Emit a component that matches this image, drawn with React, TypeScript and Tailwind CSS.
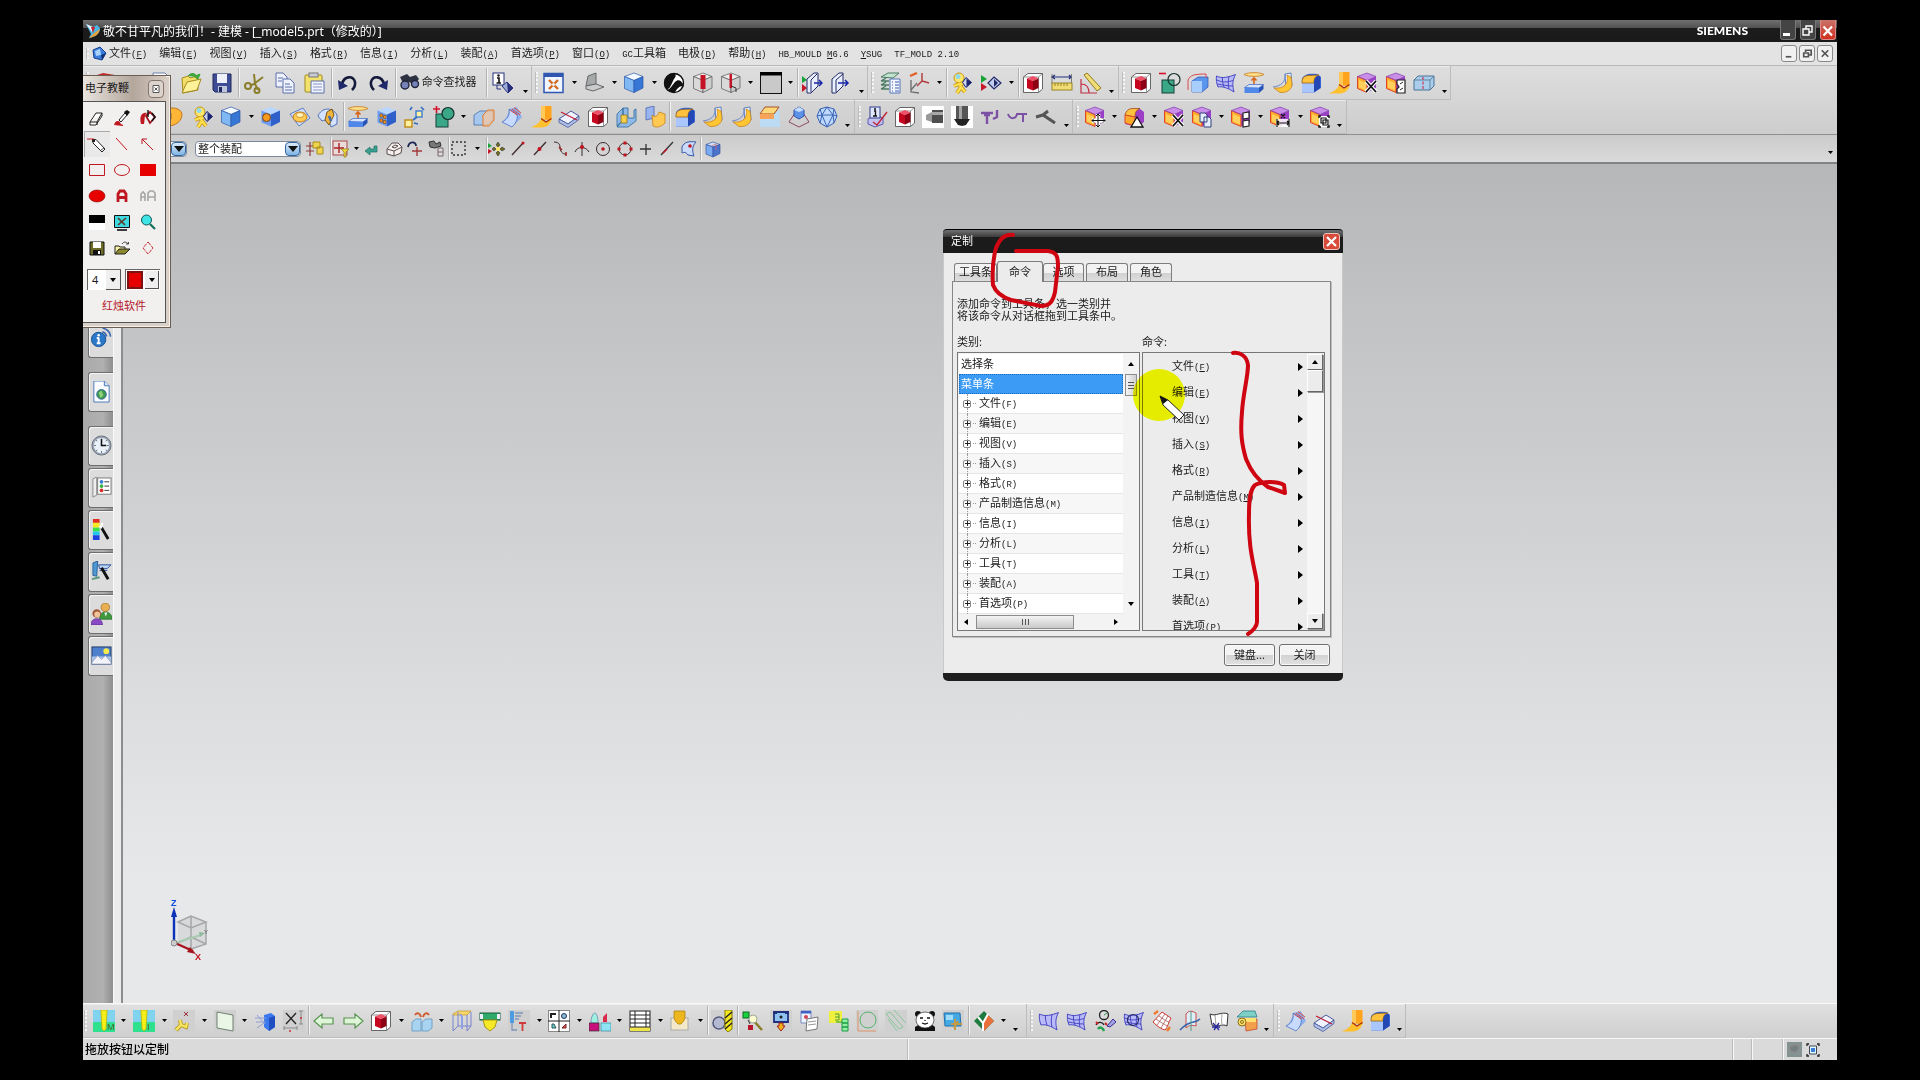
import type { ReactNode } from 'react'
import clsx from 'clsx'

/* ---------- icon parts, drawn in a 22 x 22 box ---------- */

function Cube({ t, l, r, s = 'none' }: { t: string; l: string; r: string; s?: string }) {
  return (
    <g stroke={s} strokeWidth=".7" strokeLinejoin="round">
      <path fill={t} d="M11 1 20 4.5 11 8.5 1.5 4.5Z" />
      <path fill={l} d="M1.5 4.5 11 8.5V20.5L1.5 16.5Z" />
      <path fill={r} d="M20 4.5 11 8.5V20.5L20 16Z" />
    </g>
  )
}

const SyncCube = () => (
  <g>
    <Cube t="#c98fe8" l="#ffa92b" r="#9a3fc6" />
    <path d="M3 8 10 11V18.5L3 15.5Z" fill="#ffd15c" />
    <path d="M1.5 4.5 11 8.5V20.5L1.5 16.5Z" fill="none" stroke="#e2452e" strokeWidth="1" />
    <path d="M11 1 20 4.5 11 8.5 1.5 4.5Z" fill="none" stroke="#8a49b4" strokeWidth=".8" />
  </g>
)

const RedCube = () => (
  <g>
    <path d="M1.5 5 6 1.5H20.5V17L16.5 20.5H1.5Z" fill="#fff" stroke="#444" strokeWidth=".8" />
    <path d="M1.5 5H16.5V20.5M16.5 5 20.5 1.5" fill="none" stroke="#777" strokeWidth=".8" />
    <path d="M11 4 16.5 6.5 11 9 5 6.5Z" fill="#ef5068" />
    <path d="M5 6.5 11 9V18.5L5 16Z" fill="#c4061f" />
    <path d="M16.5 6.5 11 9V18.5L16.5 16Z" fill="#8d0014" />
  </g>
)

const Person = () => (
  <g>
    <circle cx="8" cy="6" r="5" fill="#ffe76a" stroke="#c79412" />
    <circle cx="7" cy="4.5" r="2.5" fill="#8fd8ee" />
    <path d="M8 11 10 15 6 21M10 15 14 20M8 12 3 14M9 12 14 11" fill="none" stroke="#c79412" strokeWidth="4" strokeLinejoin="round" />
    <path d="M8 11 10 15 6 21M10 15 14 20M8 12 3 14M9 12 14 11" fill="none" stroke="#ffe14d" strokeWidth="2.4" strokeLinejoin="round" />
    <path d="M15 5.5 20.5 10.5 15 15.5 11.5 10.5Z" fill="#c9d2ec" stroke="#1b2470" />
    <path d="M15.5 6.5 20.5 10.5 15.5 15Z" fill="#1b2470" />
  </g>
)

const Leg = () => (
  <g>
    <path d="M11 0H21.5V14L11 13.5Z" fill="#ffa41c" />
    <path d="M11 0H15V13H11Z" fill="#ffc95a" />
    <path d="M11 12.5C10 17 6 19 1 21.5H12C17 21 21 18 21.5 13L16 16Z" fill="#ffc02e" />
    <path d="M11 12.5 16 16 21.5 12.5" fill="none" stroke="#a32a10" strokeWidth="1.2" />
  </g>
)

const Blend = () => (
  <g>
    <path d="M2 7C3 3 8 1 17 2L21 5V16L14 20.5H2Z" fill="#3563d8" />
    <path d="M2 11H14V20.5H2Z" fill="#a9c6ff" />
    <path d="M2 10C2 5 5 4 8 3.5L19 3C15 4 14 7 14 11H2Z" fill="#ffc23e" stroke="#94601a" strokeWidth=".8" />
    <path d="M14 11C14 7 16 4 20 4V16L14 20.5Z" fill="#2348b4" />
  </g>
)

const Mesh = () => (
  <g fill="#b9baf8" stroke="#4847c4" strokeWidth="1">
    <path d="M1.5 4C7 7 14 5 20.5 2.5 17 9 17.5 14 19 20 13 16 7 14 3 15 1.5 11 1 8 1.5 4Z" />
    <path d="M7.5 5.5C7 9 8 12 9 15M14 4.5C13 9 13 13 14 17M2 8C8 11 13 10 18 8.5M2.5 12C8 13 13 14 18 14" fill="none" />
  </g>
)

const Unite = ({ sign }: { sign: string }) => (
  <g>
    <rect x="3" y="8" width="12" height="13" fill="#3aa786" stroke="#17403a" />
    <circle cx="15" cy="7.5" r="6" fill={sign === '+' ? '#3aa786' : 'none'} stroke="#17302c" strokeWidth="1.2" />
    <path d={sign === '+' ? 'M0 3H7M3.5 0V7' : 'M0 1.5H7'} stroke="#d5122c" strokeWidth="1.6" />
  </g>
)

const Caliper = ({ letter }: { letter: string }) => (
  <g>
    <rect width="22" height="22" fill="#7fd3ef" />
    <rect y="12" width="22" height="10" fill="#2fe08e" />
    <path d="M8 0H14V3L13 19 11 21 9 19 8 3Z" fill="#f6ee17" stroke="#b5a80c" strokeWidth=".7" />
    <text x="14" y="20" fontSize="9" fill="#4b5c28" fontFamily="Liberation Sans">{letter}</text>
  </g>
)

const Backing = () => <rect width="22" height="22" fill="#d0d0d0" />

const icons: Record<string, ReactNode> = {
  start: <path d="M2 3 8 1 20 3 17 10 4 12Z" fill="#c22b2b" />,
  new: <path d="M3 1H15L19 5V21H3Z" fill="#fff" stroke="#6f7ea8" />,
  open: (
    <g>
      <path d="M2 6 8 4 10 6 17 4 18 18 3 21Z" fill="#f2df6a" stroke="#a58a20" />
      <path d="M2 21 7 10 21 7 17 18Z" fill="#fdf29a" stroke="#a58a20" />
      <path d="M8 4C11 0 16 1 17 5M14 4.5 18 7 20 2Z" fill="#3da53c" stroke="#3da53c" />
    </g>
  ),
  save: (
    <g>
      <path d="M2 2H20V20H4L2 18Z" fill="#3e4c96" stroke="#1e2860" />
      <rect x="6" y="2" width="10" height="9" fill="#eef1fb" />
      <rect x="7" y="14" width="9" height="6" fill="#bfc6dc" />
      <rect x="8" y="15" width="3" height="5" fill="#1e2860" />
    </g>
  ),
  cut: (
    <g fill="none" stroke="#8b7f2c" strokeWidth="2">
      <path d="M10 2 11 12 14 18M19 5 10 12 6 14" />
      <circle cx="4" cy="14" r="3" />
      <circle cx="13" cy="18.5" r="2.5" />
    </g>
  ),
  copy: (
    <g fill="#eef2ff" stroke="#5b6ea8">
      <path d="M2 1H9L13 5V15H2Z" />
      <path d="M9 7H16L20 11V21H9Z" />
      <path d="M4 6H9M4 9H8M11 12H16M11 15H18M11 18H18" fill="none" />
    </g>
  ),
  paste: (
    <g>
      <rect x="1" y="3" width="17" height="17" rx="1" fill="#f3e26c" stroke="#a18a1e" />
      <rect x="5" y="1" width="9" height="4" fill="#c9ccd6" stroke="#777" />
      <path d="M7 9H20V21H7Z" fill="#f2f5ff" stroke="#5b6ea8" />
      <path d="M9 12H18M9 15H18M9 18H18" stroke="#8796c4" />
    </g>
  ),
  undo: (
    <g>
      <path d="M5 12C7 4 16 3 18 10 18.5 13 17 16 15 18" fill="none" stroke="#151a3c" strokeWidth="2.6" />
      <path d="M1 8 2 18 11 14Z" fill="#20286c" />
    </g>
  ),
  redo: (
    <g>
      <path d="M17 12C15 4 6 3 4 10 3.5 13 5 16 7 18" fill="none" stroke="#151a3c" strokeWidth="2.6" />
      <path d="M21 8 20 18 11 14Z" fill="#20286c" />
    </g>
  ),
  finder: (
    <g>
      <path d="M2 5 9 2 12 5 18 3 21 7 17 12 10 10 4 9Z" fill="#2d3242" />
      <circle cx="7" cy="13" r="4" fill="#7583b8" stroke="#20243a" strokeWidth="1.4" />
      <circle cx="17" cy="12" r="3.5" fill="#7583b8" stroke="#20243a" strokeWidth="1.4" />
    </g>
  ),
  info: (
    <g>
      <rect x="1" y="1" width="11" height="12" fill="#fff" stroke="#26307c" />
      <path d="M5 6H7V11M4.5 11H9" fill="none" stroke="#111" strokeWidth="1.6" />
      <circle cx="6.5" cy="3.5" r="1.2" fill="#111" />
      <path d="M10 14 15 10 21 16 16 21Z" fill="#9cabd8" stroke="#26307c" />
      <path d="M15 10 21 16 16 21Z" fill="#26307c" />
      <path d="M5 13V17H9" fill="none" stroke="#26307c" />
    </g>
  ),
  fit: (
    <g>
      <rect x="1" y="1.5" width="19" height="19" fill="#f0f5ff" stroke="#2f56b0" strokeWidth="1.5" />
      <rect x="1" y="1" width="19" height="4" fill="#2f56b0" />
      <path d="M6 8 15 17M15 8 6 17" stroke="#d2691e" strokeWidth="2.4" />
      <circle cx="10.5" cy="12.5" r="1.5" fill="#f0f5ff" />
    </g>
  ),
  shade: (
    <g>
      <path d="M5 4 13 1 13 12 3 14Z" fill="#a7aaaa" stroke="#666" />
      <path d="M3 14 13 12 21 15 10 19 3 17Z" fill="#c9cccc" stroke="#666" />
    </g>
  ),
  bluecube: <Cube t="#f2f9ff" l="#7fb8f2" r="#3676d4" s="#2d57a8" />,
  yin: (
    <g>
      <circle cx="11" cy="11" r="10" fill="#111" />
      <path d="M12 1.5C18 2 21 7 20 12 18 8 15 7 12 10 9 13 8 17 4 18 8 22 13 21 12 20 14 17 16 14 20 14 19 18 16 21 11 21L11 20.5C9 21 6 20 3.500 17.500 7 17 8 13 10 9 11 6 14 5 12 1.500Z" fill="#fff" />
      <circle cx="11" cy="11" r="9.5" stroke="#111" strokeWidth="1.4" />
    </g>
  ),
  wirered: (
    <g>
      <Cube t="#eceaea" l="#d9d9d9" r="#cfcfcf" s="#555" />
      <rect x="8.5" y="3" width="5" height="14" fill="#c51224" />
    </g>
  ),
  wirecut: (
    <g>
      <Cube t="#eceaea" l="#d9d9d9" r="#cfcfcf" s="#555" />
      <rect x="9.5" y="2" width="2.5" height="14" fill="#c51224" />
      <path d="M11 14 16 16V20" stroke="#333" />
    </g>
  ),
  bgcolor: (
    <g>
      <rect x=".5" y=".5" width="21" height="21" fill="#c9c9c9" stroke="#111" />
      <rect width="22" height="3.5" fill="#000" />
    </g>
  ),
  clipgo: (
    <g>
      <path d="M1 4 6 8 1 11Z" fill="#18a336" />
      <path d="M1 12 6 16 1 20Z" fill="#c5162a" />
      <path d="M6 7 13 1H17V14L10 21H6Z" fill="#e9efff" stroke="#222b66" />
      <path d="M10 8V20M10 8 16 2" stroke="#222b66" />
      <path d="M13 11H21M18 8 21 11 18 14" stroke="#1726a8" strokeWidth="1.5" />
    </g>
  ),
  clip: (
    <g>
      <path d="M2 7 9 1H13V14L6 21H2Z" fill="#e9efff" stroke="#222b66" />
      <path d="M6 8V20M6 8 13 2" stroke="#222b66" />
      <path d="M8 11H18M15 8 18 11 15 14" stroke="#1726a8" strokeWidth="1.5" />
    </g>
  ),
  layers: (
    <g>
      <path d="M1 5 8 1H19L13 6Z" fill="#bfe3cc" stroke="#4a7a63" />
      <path d="M1 9 6 6M1 13 6 10M1 17 6 14M1 17H9M1 9H9M1 13H9" stroke="#4a7a63" strokeWidth="1.4" />
      <path d="M10 7H20V21H10Z" fill="#f1f5ff" stroke="#5472b4" />
      <path d="M12 10H13M15 10H19M12 13H13M15 13H19M12 16H13M15 16H19M12 19H13M15 19H19" stroke="#3b5cab" />
    </g>
  ),
  csys: (
    <g>
      <path d="M2 8V20L10 21M2 18 8 11" stroke="#707070" strokeWidth="1.4" />
      <path d="M13 1V9L20 11M13 9 8 14" stroke="#b33a3a" strokeWidth="1.4" />
      <path d="M1 4 8 1" stroke="#e2622a" strokeWidth="2.4" />
    </g>
  ),
  person: <Person />,
  play: (
    <g>
      <path d="M1 3 7 7 1 11Z" fill="#18a336" />
      <path d="M1 11 7 15 1 19Z" fill="#c5162a" />
      <path d="M14 5 21 11 14 17 8 11Z" fill="#c3cdec" stroke="#222b66" strokeWidth="1.2" />
      <path d="M14 7 18 11 14 15Z" fill="#222b66" />
    </g>
  ),
  redcube: <RedCube />,
  ruler: (
    <g>
      <path d="M1 5H20M4 3 1 5 4 7M18 3 20 5 18 7" stroke="#26307c" strokeWidth="1.2" />
      <path d="M1 2V12M20.5 2V12" stroke="#555" strokeWidth=".7" />
      <rect x="1" y="11" width="20" height="7" fill="#f0dd76" stroke="#9a8422" />
      <path d="M4 11V14M7 11V14M10 11V14M13 11V14M16 11V14" stroke="#9a8422" />
    </g>
  ),
  angle: (
    <g>
      <path d="M1 7V21H17M1 12C7 12 9 16 9 21" stroke="#c22f45" strokeWidth="1.2" />
      <path d="M4 3 7 1 21 16 17 19Z" fill="#f0dd76" stroke="#8f7a1e" />
    </g>
  ),
  unite: <Unite sign="+" />,
  subtract: <Unite sign="-" />,
  shell: (
    <g>
      <path d="M5 9 11 5H21V15L15 20H5Z" fill="#5b96ee" stroke="#2b4eb0" strokeWidth=".7" />
      <path d="M5 9H15V20H5Z" fill="#a8ceff" />
      <path d="M1 18V8C3 3 8 2 19 2V6" stroke="#d64a55" />
    </g>
  ),
  mesh: <Mesh />,
  extrude: (
    <g>
      <path d="M1 2.5C5 0 17 0 21 2.5 17 5 5 5 1 2.5Z" fill="#ffe08a" stroke="#c87a1a" strokeWidth=".8" />
      <path d="M11 12V6M8.5 8.5 11 6 13.5 8.5" stroke="#d8641c" strokeWidth="1.6" />
      <path d="M1.5 15.5 6 12.5H20.5L16 16Z" fill="#d6e5ff" stroke="#3763c4" strokeWidth=".7" />
      <path d="M1.5 15.5 16 16V21H1.5Z" fill="#4f88e8" />
      <path d="M16 16 20.5 12.5V17L16 21Z" fill="#2753b8" />
    </g>
  ),
  sweep: (
    <g>
      <path d="M13 2 19 1 20 14 14 16Z" fill="#e8f1ff" stroke="#4168b0" strokeWidth=".8" />
      <path d="M15 3C17 12 12 17 2 16L8 20.5C17 21 20 16 20 12L19 5Z" fill="#ffc634" stroke="#c77a16" strokeWidth=".7" />
      <path d="M13 2C14 10 9 14 1 15" stroke="#6b88c8" />
    </g>
  ),
  blend: <Blend />,
  leg: <Leg />,
  draft: (
    <g>
      <path d="M8 3 16 1 21 11 11 21 1 16C5 13 7 9 8 3Z" fill="#8fb0ee" />
      <path d="M8 3C9 9 7 13 1 16L11 21C15 17 17 13 16 8Z" fill="#c6dbff" stroke="#4669b4" strokeWidth=".7" />
      <path d="M11 3 19 9M13 1.5 20 7M9 4 16 9" stroke="#d9443f" />
    </g>
  ),
  slab: (
    <g>
      <path d="M1 13 13 5 21 10 10 18Z" fill="#eef3ff" stroke="#49599a" />
      <path d="M1 13V16.5L10 21.5 21 13.5V10L10 18Z" fill="#aebfe6" stroke="#49599a" strokeWidth=".8" />
      <path d="M3 6 19 14" stroke="#c01830" strokeWidth="1.2" />
    </g>
  ),
  syncdel: (
    <g>
      <SyncCube />
      <path d="M10 9 20 20M20 9 10 20" stroke="#fff" strokeWidth="4" />
      <path d="M10 9 20 20M20 9 10 20" stroke="#111" strokeWidth="1.8" />
    </g>
  ),
  syncreplace: (
    <g>
      <SyncCube />
      <path d="M12 8H20V21H12V17L14 15 12 12Z" fill="#fff" stroke="#222" strokeWidth="1.2" />
      <path d="M15 12 18 10M15 18 18 16" stroke="#222" />
    </g>
  ),
  syncmove: (
    <g>
      <SyncCube />
      <path d="M14 8V21M8 14.5H21" stroke="#fff" strokeWidth="4.5" />
      <path d="M14 8V21M8 14.5H21M12 10 14 8 16 10M12 19 14 21 16 19M10 12.5 8 14.5 10 16.5M19 12.5 21 14.5 19 16.5" stroke="#111" />
    </g>
  ),
  syncpull: (
    <g>
      <path d="M2 9 9 3H17L21 6V16L14 21 2 18Z" fill="#9a3fc6" />
      <path d="M2 9C3 5 5 3 9 2.5H17C13 4 12 7 12 11L2 9Z" fill="#ffc23e" stroke="#a04a1c" strokeWidth=".8" />
      <path d="M2 9 12 11V20L2 17Z" fill="#ffa92b" stroke="#e2452e" />
      <path d="M14 11 20 21H8Z" fill="#fff" stroke="#111" strokeWidth="1.3" />
    </g>
  ),
  synccopy: (
    <g>
      <SyncCube />
      <path d="M9 7H14L16 9V16H9ZM13 11H18L20 13V21H13Z" fill="#e6edff" stroke="#33407c" />
    </g>
  ),
  syncpanel: (
    <g>
      <SyncCube />
      <path d="M13 7 19 6V12L13 13ZM13 15 19 14V20L13 21Z" fill="#fff" stroke="#222" strokeWidth="1.2" />
    </g>
  ),
  syncdim: (
    <g>
      <SyncCube />
      <path d="M7 13H21V21H7Z" fill="#fff" opacity=".85" />
      <path d="M8 13V21M20 13V21M8 17H20M10 15 8 17 10 19M18 15 20 17 18 19M12 8 16 12M16 8 12 12" stroke="#111" strokeWidth="1.2" />
    </g>
  ),
  syncgroup: (
    <g>
      <SyncCube />
      <path d="M10 10H20V21H10Z" fill="#fff" />
      <path d="M12 12H17V17H12ZM14 14H19V19H14Z" stroke="#111" strokeWidth="1.2" />
      <path d="M10 12V10H12M20 12V10H18M10 19V21H12M20 19V21H18" stroke="#111" strokeWidth="1.4" />
    </g>
  ),
  tube: (
    <g>
      <path d="M1 8 5 4H21V14L17 18H1Z" fill="#a9cdea" stroke="#4b7397" />
      <path d="M1 8H17V18M17 8 21 4" stroke="#4b7397" strokeWidth=".8" />
      <path d="M10 5V18" stroke="#c94d6c" strokeWidth="1.4" strokeDasharray="3 1.5" />
    </g>
  ),
  sketch: <path d="M2 16 14 3 19 8 7 20 2 21Z" fill="#f4d64c" stroke="#8b7a1a" />,
  revolve: (
    <g>
      <path d="M2 4C8 0 18 2 19 8 19 15 13 20 4 20L8 13 2 11Z" fill="#ffb636" stroke="#c2761c" />
      <path d="M2 4 8 7V13" stroke="#b0701c" />
    </g>
  ),
  hole: (
    <g>
      <Cube t="#b9d6ff" l="#6b9cf0" r="#2f5fc8" />
      <circle cx="6.5" cy="11.5" r="4" fill="#f79a1f" stroke="#7a4210" />
    </g>
  ),
  boss: (
    <g>
      <path d="M1 8 14 2 21 12 10 20Z" fill="#cfe0ff" stroke="#5f7fc0" />
      <ellipse cx="11" cy="11" rx="7" ry="5" fill="#ffcb4d" stroke="#c27a1b" />
      <ellipse cx="11" cy="9" rx="4" ry="2.5" fill="#fff1b8" stroke="#c27a1b" strokeWidth=".7" />
    </g>
  ),
  groove: (
    <g>
      <path d="M1 10C4 2 15 0 20 9V18L14 21C13 15 9 13 5 15Z" fill="#d2e2ff" stroke="#5470b4" />
      <path d="M10 6 15 3 17 9 12 19 8 14Z" fill="#f3b43a" stroke="#7a5516" />
      <path d="M12 10 14 15" stroke="#3a6db5" strokeWidth="2.4" />
    </g>
  ),
  pattern: (
    <g>
      <Cube t="#b9d6ff" l="#6b9cf0" r="#2f5fc8" />
      <path d="M4 8H6.5V11H4ZM7.5 9.5H10V12.5H7.5ZM4 13H6.5V16H4ZM7.5 14.5H10V17.5H7.5Z" fill="#f79a1f" stroke="#7a4210" strokeWidth=".6" />
    </g>
  ),
  array: (
    <g>
      <rect x="1" y="14" width="7" height="7" fill="#fff1a0" stroke="#bd8a14" strokeWidth="1.4" />
      <rect x="12" y="5" width="6" height="6" fill="#fff1a0" stroke="#3a7cd0" strokeWidth="1.4" />
      <path d="M9 14 13 11M6 4 8 1M17 1 20 4M10 17 14 18" stroke="#2f6bc4" strokeWidth="1.6" />
    </g>
  ),
  trim: (
    <g>
      <path d="M1 9 7 5H20V14L14 19H1Z" fill="#a6c8ef" stroke="#476ca8" strokeWidth=".8" />
      <path d="M10 9 15 4H21V14L16 20H10Z" fill="#fbc79b" fillOpacity=".7" stroke="#e07a2a" />
    </g>
  ),
  thicken: (
    <g>
      <path d="M2 8 8 2V14L2 20ZM8 2H13V12H19V4L21 3V15L13 21H2L8 14Z" fill="#8fb9e8" stroke="#2e6b9c" strokeWidth=".8" />
      <path d="M6 9H12V17H6Z" fill="#f5cf49" stroke="#8c6c14" strokeWidth=".7" />
    </g>
  ),
  offset: (
    <g>
      <path d="M2 2 10 0V12L2 14Z" fill="#9ab4ef" stroke="#4a64b4" strokeWidth=".8" />
      <path d="M8 9C11 12 14 10 15 6L21 8V17C17 21 13 22 9 20Z" fill="#ffc850" stroke="#c5831d" strokeWidth=".8" />
    </g>
  ),
  patch: (
    <g>
      <path d="M1 8H15L20 4 21 21H1Z" fill="#bcdcf6" />
      <path d="M1 8 6 1H20L15 8Z" fill="#ffd87a" stroke="#a8502b" />
      <path d="M1 8H15V13H1Z" fill="#f7a35b" />
    </g>
  ),
  scale: (
    <g>
      <path d="M11 1 21 16 11 21 1 16Z" stroke="#8d4a5c" />
      <path d="M11 1 16 4V10L11 13 6 10V4Z" fill="#5d92e8" stroke="#2d55aa" />
      <path d="M11 1 16 4 11 6 6 4Z" fill="#c7ddff" />
    </g>
  ),
  sphere: (
    <g stroke="#3a62b4">
      <path d="M11 1 18 3 21 10 18 17 11 21 4 17 1 10 4 3Z" fill="#bdd8fb" />
      <path d="M11 1 6 9 11 21 17 9ZM1 10 6 9H17L21 10M4 3 6 9M18 3 17 9M4 17 6 9M18 17 17 9" />
    </g>
  ),
  infocube: (
    <g>
      <path d="M2 13 9 9 17 12V18L9 21 2 18Z" fill="#c3c3f1" stroke="#5a58b4" />
      <rect x="4" y="1" width="10" height="11" fill="#dfe6ff" stroke="#333e8a" />
      <path d="M8 5H9.5V10M7 10H11M8 3H10" stroke="#111" strokeWidth="1.3" />
      <path d="M7 16 11 19 21 6" stroke="#c02538" strokeWidth="1.4" />
    </g>
  ),
  nozzle: (
    <g>
      <rect width="22" height="22" fill="#fff" />
      <path d="M4 9 10 6V16L4 14Z" fill="#999" />
      <path d="M10 4H21V17H10Z" fill="#4e4e4e" />
      <path d="M10 6H21V9H10Z" fill="#a8a8a8" />
    </g>
  ),
  mill: (
    <g>
      <rect width="22" height="22" fill="#fff" />
      <path d="M5 0H17V13H5Z" fill="#555" />
      <path d="M8 0H11V13H8Z" fill="#a5a5a5" />
      <path d="M3 13H19L15 19 11 20 7 19Z" fill="#222" />
    </g>
  ),
  clampa: <path d="M2 7H14M8 7V18M5 9H11M18 4V11L14 13" stroke="#7b50a5" strokeWidth="2.4" />,
  clampb: <path d="M1 8C3 14 9 13 10 8H20M16 8V16" stroke="#7b50a5" strokeWidth="2" />,
  branch: <path d="M1 11 8 9 20 17M8 9 13 5" stroke="#555" strokeWidth="3" />,

  // bottom row
  calM: <Caliper letter="M" />,
  calI: <Caliper letter="I" />,
  wrench: (
    <g>
      <Backing />
      <path d="M3 20 8 15 13 17 14 13M8 15 7 10" stroke="#b79b18" strokeWidth="4" />
      <path d="M3 20 8 15 13 17 14 13M8 15 7 10" stroke="#f6e462" strokeWidth="2.4" />
      <path d="M11 2 15 6M15 2 11 6" stroke="#a2303c" />
    </g>
  ),
  plane: (
    <g>
      <Backing />
      <path d="M3 2 19 5V21L3 18Z" fill="#eaf6e6" stroke="#707f70" />
    </g>
  ),
  moldblue: (
    <g>
      <path d="M10 5 17 3 21 6V17L15 21 10 17Z" fill="#3a78ee" />
      <path d="M15 8 21 6V17L15 21Z" fill="#1f4fc0" />
      <path d="M1 8H12M2 12H12M3 5 11 14M3 18 10 13" stroke="#8e9dd6" />
    </g>
  ),
  xdim: (
    <g>
      <Backing />
      <path d="M3 3 13 14M13 3 3 14" stroke="#222" strokeWidth="1.3" />
      <path d="M1 18H14M1 16V20M14 16V20M18 1V14M16 1H20M16 14H20" stroke="#8a8a8a" />
      <path d="M6 21H8M18 7V9" stroke="#c33" strokeWidth="1.5" />
    </g>
  ),
  left: <path d="M1 11 9 4V8H20V14H9V18Z" fill="#dff5d8" stroke="#5a9452" strokeWidth="1.2" />,
  right: <path d="M21 11 13 4V8H2V14H13V18Z" fill="#dff5d8" stroke="#5a9452" strokeWidth="1.2" />,
  split: (
    <g>
      <path d="M1 12 5 9H10V21H1ZM11 12 15 9H21V18L17 21H11Z" fill="#a8d4f2" stroke="#5f95bd" strokeWidth=".8" />
      <path d="M4 5C6 2 9 3 10 7M18 5C16 2 13 3 12 7" stroke="#cf5b32" strokeWidth="2" />
    </g>
  ),
  frame: (
    <g>
      <path d="M2 4 7 1H20L16 5H2Z" fill="#f6d56a" stroke="#bd9626" strokeWidth=".7" />
      <path d="M2 5V21M16 5V21M7 2V16M20 2V16M2 21 7 16H20L16 21" stroke="#7684cc" />
      <path d="M9 4 11 7V19" stroke="#8fa1e4" strokeWidth="2" />
    </g>
  ),
  funnel: (
    <g>
      <rect x="1" y="3" width="20" height="7" fill="#2faa6a" stroke="#186038" />
      <path d="M4 10H18L16 17 11 21 6 17Z" fill="#f7e928" stroke="#a39817" />
      <path d="M1 4H4V9H1ZM18 4H21V9H18Z" fill="#eef" />
    </g>
  ),
  textT: (
    <g>
      <Backing />
      <path d="M2 1H6V13H2Z" fill="#4f9ce0" />
      <path d="M4 13V20H9M7 3H15M7 6H13M7 9H11" stroke="#7d94bb" strokeWidth="1.3" />
      <path d="M11 13H18M14.5 13V21" stroke="#cf3a3a" strokeWidth="1.8" />
    </g>
  ),
  quad: (
    <g>
      <rect x=".5" y=".5" width="21" height="21" fill="#fff" stroke="#888" />
      <path d="M11 0V22M0 11H22" stroke="#222" />
      <path d="M8 4H3V8" stroke="#222" strokeWidth="2" />
      <circle cx="16" cy="6" r="2.5" fill="#8bc" stroke="#236" />
      <path d="M4 18V14H6L8 18Z" fill="#6cc" stroke="#355" />
      <path d="M14 18 18 14V18Z" fill="#e55" stroke="#722" />
    </g>
  ),
  lipstick: (
    <g>
      <path d="M2 13C2 5 5 3 6 3S9 6 9 13Z" fill="#9ff0e0" stroke="#569" strokeWidth=".6" />
      <path d="M14 12V7L18 3V12Z" fill="#d72a4c" />
      <rect y="13" width="10" height="8" fill="#c8107c" stroke="#333" strokeWidth=".7" />
      <rect x="12" y="13" width="10" height="8" fill="#8fe4f4" stroke="#3587a0" strokeWidth=".7" />
    </g>
  ),
  sheet: (
    <g>
      <rect x="1" y="1" width="20" height="20" fill="#fff" stroke="#222" />
      <path d="M1 17H21V21H1Z" fill="#efe34a" />
      <path d="M1 5H21M1 9H21M1 13H21M1 17H21M6 1V17M17 1V17" stroke="#222" />
    </g>
  ),
  pocket: (
    <g>
      <rect x="2" y="8" width="17" height="12" fill="#f3e9c8" stroke="#aaa" />
      <path d="M5 1H16V7C16 10 14 12 12 14H9C7 12 5 10 5 7Z" fill="#edb61f" stroke="#b08512" strokeWidth=".8" />
    </g>
  ),
  drill: (
    <g>
      <Backing />
      <circle cx="8" cy="13" r="6" fill="#b4b8d0" stroke="#555a80" strokeWidth="1.5" />
      <path d="M14 0H21V19L17 22 14 19Z" fill="#f4e61c" stroke="#887d00" />
      <path d="M14 8 21 2M14 14 21 8M14 19 21 13" stroke="#222" strokeWidth="1.4" />
    </g>
  ),
  wand: (
    <g>
      <rect x="1" y="2" width="6" height="6" fill="#18d13c" stroke="#0a6a1e" />
      <path d="M11 10 20 20" stroke="#8c7a28" strokeWidth="2.4" />
      <circle cx="11" cy="9" r="4" fill="#fcfbd0" stroke="#9a9" />
      <rect x="6" y="15" width="5" height="5" fill="#b8152b" />
      <path d="M6 10 8 14" stroke="#333" />
    </g>
  ),
  motor: (
    <g>
      <Backing />
      <path d="M4 2H18V12H4Z" fill="#8fc1f1" stroke="#20307c" strokeWidth="1.8" />
      <path d="M3 1H7V4H3ZM15 1H19V4H15Z" fill="#20307c" />
      <path d="M9 13H13V16H15L11 21 7 16H9Z" fill="#f2b218" stroke="#a1211c" />
      <circle cx="11" cy="7" r="1.5" fill="#222" />
    </g>
  ),
  pages: (
    <g>
      <path d="M2 1H12V13H2Z" fill="#eef2ff" stroke="#7a8bc2" />
      <path d="M2 1H12V3.5H2Z" fill="#3e63c4" />
      <path d="M8 9 19 7 18 19 7 21Z" fill="#fff" stroke="#777" />
      <path d="M9 12 17 11M9 15 17 14" stroke="#999" />
      <circle cx="7" cy="7" r="2" fill="#d4454f" />
    </g>
  ),
  ui: (
    <g>
      <rect x="1" y="1" width="13" height="12" fill="#eff03e" />
      <path d="M7 4H11V10H7M7 7H11" stroke="#4a9c3a" />
      <path d="M14 9H20V13H14ZM14 13H20V17H14ZM14 17H20V21H14ZM8 12H14" fill="#8ef0a2" stroke="#1e9a44" />
    </g>
  ),
  circle: (
    <g>
      <Backing />
      <circle cx="12" cy="10" r="8" stroke="#52b46c" />
      <path d="M2 1V21H20" stroke="#dd9367" />
    </g>
  ),
  hatch: (
    <g>
      <Backing />
      <path d="M1 4 14 19M5 2 18 17M9 0 21 13M1 4 5 2M14 19 18 17M3 9 12 21" stroke="#86c69a" />
    </g>
  ),
  panda: (
    <g>
      <path d="M1 17 6 14H17L21 17V21H1Z" fill="#111" />
      <circle cx="4" cy="4" r="3" fill="#111" />
      <circle cx="18" cy="4" r="3" fill="#111" />
      <ellipse cx="11" cy="10" rx="9" ry="8" fill="#fff" stroke="#333" strokeWidth=".7" />
      <path d="M6 8H9M13 8H16M8 13 11 14 14 13M11 10V11" stroke="#111" strokeWidth="1.3" />
    </g>
  ),
  screen: (
    <g>
      <Backing />
      <path d="M2 3H18L19 16H3Z" fill="#44a8e2" stroke="#2272ae" />
      <path d="M4 5H11V10H4Z" fill="#a0dcf8" />
      <path d="M13 9V20M9 14H20M16 11 12 18" stroke="#c39a45" strokeWidth="2" />
    </g>
  ),
  logo: (
    <g>
      <path d="M11 1 21 11 11 21 1 11Z" fill="#1f7a40" />
      <path d="M15 5 21 11 11 21 10 13Z" fill="#e9703a" />
      <path d="M5 7 10 13V21M10 13 15 4" stroke="#fff" strokeWidth="2" />
    </g>
  ),
  surface: (
    <g stroke="#4847c4">
      <path d="M1.5 4C7 7 14 5 20.5 2.5 17 9 17.5 14 19 20 13 16 7 14 3 15 1.5 11 1 8 1.5 4Z" fill="#b9baf8" />
      <path d="M7.5 5.5C7 9 8 12 9 15M14 4.5C13 9 13 13 14 17" />
    </g>
  ),
  curves: (
    <g>
      <circle cx="9" cy="5" r="4.5" stroke="#222" strokeWidth="1.3" />
      <path d="M9 5 12 3" stroke="#2b9a4a" />
      <path d="M1 15C3 11 8 12 9 15" stroke="#222" strokeWidth="1.3" />
      <path d="M3 19C5 16 8 18 9 21" stroke="#1fa04b" strokeWidth="2.4" />
      <path d="M12 16 18 9 21 12 15 17Z" fill="#a3a0e8" stroke="#33318f" />
      <path d="M1 12 3 14M10 13 12 15" stroke="#c22" strokeWidth="2" />
    </g>
  ),
  meshring: (
    <g>
      <Mesh />
      <circle cx="10" cy="10" r="5.5" stroke="#222a66" strokeWidth="1.2" />
    </g>
  ),
  meshred: (
    <g>
      <path d="M2 12 11 2 20 8C17 13 17 17 14 20 10 19 6 16 2 12Z" fill="#fff" stroke="#cf3b33" />
      <path d="M5 9C9 12 13 14 16 16M8 6C12 9 15 11 18 12M6 15 14 4M10 18 17 6" stroke="#a55" strokeWidth=".8" />
      <path d="M3 4 7 1M16 21 19 17" stroke="#ef7a2d" strokeWidth="2.4" />
    </g>
  ),
  section: (
    <g>
      <path d="M7 4C10 0 13 1 17 3V16C13 15 10 15 7 18Z" fill="#dceef7" stroke="#c94b4b" />
      <path d="M1 20C5 16 8 14 11 13S18 12 21 9" stroke="#3a62a8" strokeWidth="1.6" />
      <path d="M12 1V21" stroke="#598" />
    </g>
  ),
  flag: (
    <g>
      <path d="M2 4C7 7 14 1 20 4L19 16C14 13 9 18 4 15Z" fill="#fff" stroke="#333" />
      <path d="M7 5C7 9 8 12 8 16M14 3C14 8 13 10 14 14" stroke="#888" strokeWidth=".8" />
      <path d="M5 13 11 20M11 13 6 20M4 17H12" stroke="#2c2a9c" strokeWidth="1.3" />
    </g>
  ),
  roll: (
    <g>
      <path d="M1 7 7 1H19L21 7Z" fill="#7fd0c4" stroke="#2a7d8a" strokeWidth=".8" />
      <path d="M9 9H21V19L10 21Z" fill="#f2a04b" stroke="#c24b34" strokeWidth=".8" />
      <path d="M5 8H20V12H6Z" fill="#ffe36e" />
      <circle cx="6" cy="12" r="4" fill="#ffe36e" stroke="#8b6d18" />
      <circle cx="6" cy="12" r="1.5" stroke="#8b6d18" />
    </g>
  ),

  // selection bar
  filter: (
    <g>
      <path d="M6 4V18M2 8H12M2 13H10" stroke="#8b3a3a" strokeWidth="1.2" />
      <path d="M9 4H16V10H9ZM13 9H19V16H13Z" fill="#f0d64e" stroke="#a78b1c" />
    </g>
  ),
  snapbox: (
    <g>
      <rect x="3" y="3" width="14" height="14" fill="#eadada" stroke="#a94a4a" />
      <path d="M9 5V15M4 10H14" stroke="#a22" strokeWidth="1.4" />
      <path d="M11 11H19L16 14V19H14V14Z" fill="#f1da3c" stroke="#8b7a1a" strokeWidth=".7" />
    </g>
  ),
  back: <path d="M4 13 9 9V11H13V8H16V14H9V17Z" fill="#3aa092" stroke="#1f6f64" strokeWidth=".7" />,
  solid: (
    <g fill="#f4efee" stroke="#5b4d4d">
      <path d="M4 11 9 5 15 5 19 9 18 15 11 18 4 16Z" />
      <path d="M4 11 11 13 19 9M11 13V18M9 9 12 7 15 8 12 10Z" />
    </g>
  ),
  turnplus: (
    <g>
      <path d="M4 9C5 3 12 3 12 8" stroke="#1b2050" strokeWidth="1.8" />
      <path d="M13 9V18M8 13H18" stroke="#a43b3b" strokeWidth="1.4" />
    </g>
  ),
  finddoc: (
    <g>
      <path d="M3 4 8 3 10 6 14 4 15 8 9 10 4 9Z" fill="#777" stroke="#333" />
      <path d="M12 10H17V18H12ZM12 14H17" fill="#ddd" stroke="#766" />
    </g>
  ),
  marquee: <path d="M4 4H17V17H4Z" stroke="#333" strokeWidth="1.4" strokeDasharray="2 2" />,
  snapall: (
    <g>
      <path d="M2 5 6 8 2 10Z" fill="#18a336" />
      <path d="M2 11 6 13 2 16Z" fill="#c5162a" />
      <path d="M12 4 14 7 12 9 10 7ZM12 13 14 15 12 18 10 15ZM6 11 8 9 10 11 8 13ZM14 11 16 9 19 11 16 13Z" fill="#6f6c22" stroke="#333" strokeWidth=".6" />
      <circle cx="12" cy="11" r="2" fill="#ffe95a" />
    </g>
  ),
  endpoint: (
    <g>
      <path d="M5 17 16 5" stroke="#3b2a2a" strokeWidth="1.3" />
      <circle cx="16" cy="5" r="1.5" fill="#c1121f" />
    </g>
  ),
  midpoint: (
    <g>
      <path d="M5 17 17 4" stroke="#3b2a2a" strokeWidth="1.3" />
      <circle cx="10.5" cy="11" r="2" fill="#c1121f" />
    </g>
  ),
  ctrlpoint: (
    <g stroke="#3b2a2a">
      <path d="M4 4C10 4 10 8 10 10S12 17 17 16" />
      <path d="M9 9 12 12M16 14V18" stroke="#a22" strokeWidth="1.5" />
    </g>
  ),
  cross: (
    <g>
      <path d="M11 4V18M4 14C6 8 15 8 18 14" stroke="#3b2a2a" />
      <circle cx="11" cy="9" r="2" fill="#c1121f" />
    </g>
  ),
  center: (
    <g>
      <circle cx="11" cy="11" r="6.5" stroke="#3b2a2a" />
      <circle cx="11" cy="11" r="1.8" fill="#c1121f" />
    </g>
  ),
  quadrant: (
    <g>
      <circle cx="11" cy="11" r="6" stroke="#333" />
      <path d="M11 3.5V6.5M11 15.5V18.5M3.5 11H6.5M15.5 11H18.5" stroke="#c1121f" strokeWidth="3" />
    </g>
  ),
  plus: <path d="M11 6V17M5 11H16" stroke="#333" strokeWidth="1.3" />,
  oncurve: (
    <g>
      <path d="M5 17 17 4" stroke="#333" strokeWidth="1.3" />
      <path d="M7 15 11 11" stroke="#c1121f" strokeWidth="1.6" />
    </g>
  ),
  face: (
    <g>
      <path d="M4 9C6 4 11 3 18 4 14 8 14 13 16 18L10 17C8 14 6 14 4 15Z" fill="#c9dafb" stroke="#3656a4" />
      <circle cx="12" cy="8" r="1.8" fill="#c1121f" />
    </g>
  ),
  facecube: (
    <g stroke="#3656a4" strokeWidth=".7">
      <path d="M11 4 18 6.5 11 9 4 6.5Z" fill="#cfe3fb" />
      <path d="M4 6.5 11 9V19L4 16Z" fill="#7aaaf0" />
      <path d="M18 6.5 11 9V19L18 15.5Z" fill="#4a74cc" />
      <path d="M9 8 14 6V12" stroke="#d66" />
    </g>
  ),
}

function Icon({ name }: { name: string }) {
  return (
    <svg viewBox="0 0 22 22" className="h-[22px] w-[22px] shrink-0" fill="none" aria-hidden="true">
      {icons[name]}
    </svg>
  )
}

function Caret() {
  return (
    <svg viewBox="0 0 5 3" className="h-[3px] w-[5px]" aria-hidden="true">
      <path d="M0 0H5L2.5 3Z" />
    </svg>
  )
}

function Arrow({ d, tall }: { d: string; tall?: boolean }) {
  return (
    <svg viewBox={tall ? '0 0 4 6' : '0 0 6 4'} className={clsx('shrink-0', tall ? 'h-1.5 w-1' : 'h-1 w-1.5')} aria-hidden="true">
      <path d={d} />
    </svg>
  )
}

const UP = 'M0 4H6L3 0Z'
const DOWN = 'M0 0H6L3 4Z'

/* ---------- toolbars ---------- */

// '|' divider, 'v' drop arrow of the icon before it, '>' overflow arrow
function ToolItems({ items, small }: { items: string[]; small?: boolean }) {
  return (
    <>
      {items.map((item, i) => {
        if (item === '|') return <span key={i} className="my-0.5 w-px self-stretch bg-[#b2b2b2] shadow-[1px_0_0_#f4f4f4]" />
        if (item === 'v')
          return (
            <button key={i} aria-label="更多" className={clsx('flex justify-center', small ? 'w-2' : 'w-[11px]')}>
              <Caret />
            </button>
          )
        if (item === '>')
          return (
            <button key={i} aria-label="工具条选项" className="flex w-3 justify-center self-end pb-1.5">
              <Caret />
            </button>
          )
        return (
          <button key={i} aria-label={item} className={clsx('flex shrink-0 items-center justify-center', small ? 'w-5' : 'w-7')}>
            <Icon name={item} />
          </button>
        )
      })}
    </>
  )
}

function Grip() {
  return <span className="my-1.5 w-1 shrink-0 self-stretch border-l-2 border-dotted border-[#f6f6f6] shadow-[-1px_0_0_#bdbdbd]" />
}

function ToolGroup({ items, className, children }: { items: string[]; className: string; children?: ReactNode }) {
  return (
    <div
      className={clsx(
        'flex h-[34px] shrink-0 items-center justify-between border-r border-b border-[#bcbcbc] shadow-[inset_0_1px_0_#ececec]',
        className,
      )}
    >
      <Grip />
      {children}
      <ToolItems items={items} />
    </div>
  )
}

function TopToolbars() {
  return (
    <div className="border-b border-[#8f8f8f] bg-[linear-gradient(#dedede,#cdcdcd)]">
      <div className="flex">
        <ToolGroup className="w-[449px] pl-1" items={['|', 'info', '>']}>
          <button aria-label="开始" className="w-[52px] shrink-0 pl-0.5">
            <Icon name="start" />
          </button>
          <ToolItems items={['new', 'open', 'save', '|', 'cut', 'copy', 'paste', '|', 'undo', 'redo', '|']} />
          <button className="flex w-[86px] shrink-0 items-center gap-0.5 whitespace-nowrap">
            <Icon name="finder" />
            命令查找器
          </button>
        </ToolGroup>
        <ToolGroup
          className="w-[336px] pl-1"
          items={['fit', 'v', 'shade', 'v', 'bluecube', 'v', 'yin', 'wirered', 'wirecut', 'v', 'bgcolor', 'v', '|', 'clipgo', 'clip', '>']}
        />
        <ToolGroup
          className="w-[251px] pl-1"
          items={['layers', 'csys', 'v', '|', 'person', 'play', 'v', '|', 'redcube', 'ruler', 'angle', '>']}
        />
        <ToolGroup
          className="w-[332px] pl-1"
          items={['redcube', 'subtract', 'shell', 'mesh', 'extrude', 'sweep', 'blend', 'leg', 'syncdel', 'syncreplace', 'tube', '>']}
        />
      </div>
      <div className="flex">
        <ToolGroup
          className="w-[772px] pl-1"
          items={[
            'sketch', 'plane', 'v', 'revolve', 'person', 'bluecube', 'v', 'hole', 'boss', 'groove', '|',
            'extrude', 'pattern', 'array', 'unite', 'v', 'trim', 'draft', 'leg', 'slab', 'redcube', 'thicken', 'offset', '|',
            'blend', 'sweep', 'sweep', 'patch', 'scale', 'sphere', '>',
          ]}
        />
        <ToolGroup className="w-[218px] pl-1" items={['infocube', 'redcube', 'nozzle', 'mill', 'clampa', 'clampb', 'branch', '>']} />
        <ToolGroup
          className="w-[274px] pl-1"
          items={['syncmove', 'v', 'syncpull', 'v', 'syncdel', 'synccopy', 'v', 'syncpanel', 'v', 'syncdim', 'v', 'syncgroup', '>']}
        />
      </div>
    </div>
  )
}

function BlueSelect({ value, label, className }: { value: string; label: string; className: string }) {
  return (
    <label className={clsx('flex h-4 shrink-0 rounded-sm border border-[#7b8a9c] bg-white', className)}>
      <select aria-label={label} className="min-w-0 flex-1 appearance-none pl-0.5 leading-none outline-none">
        <option>{value}</option>
      </select>
      <span className="flex w-[15px] items-center justify-center rounded-sm border border-[#35639a] bg-[linear-gradient(#dcecfb,#7fb4e4)]">
        <svg viewBox="0 0 10 6" className="h-1.5 w-2.5">
          <path d="M0 0H10L5 6Z" fill="#111" />
        </svg>
      </span>
    </label>
  )
}

function SelectionBar() {
  return (
    <div className="flex h-[29px] items-center border-b-2 border-[#808487] bg-[linear-gradient(#cbcbcb,#dadada)] pr-1 pl-2">
      <BlueSelect value="无过滤" label="类型过滤器" className="mr-2 w-24" />
      <BlueSelect value="整个装配" label="选择范围" className="mr-1 w-[106px]" />
      <div className="flex w-[26px] items-center justify-between self-stretch">
        <ToolItems small items={['filter', '|']} />
      </div>
      <div className="flex w-[118px] items-center justify-between self-stretch">
        <ToolItems small items={['snapbox', 'v', 'back', 'solid', 'turnplus', 'finddoc', '|']} />
      </div>
      <div className="flex w-[38px] items-center justify-between self-stretch">
        <ToolItems small items={['marquee', 'v', '|']} />
      </div>
      <div className="flex w-[214px] items-center justify-between self-stretch">
        <ToolItems
          small
          items={['snapall', 'endpoint', 'midpoint', 'ctrlpoint', 'cross', 'center', 'quadrant', 'plus', 'oncurve', 'face', '|']}
        />
      </div>
      <div className="flex pl-0.5">
        <ToolItems small items={['facecube']} />
      </div>
      <button aria-label="工具条选项" className="mt-2 ml-auto">
        <Caret />
      </button>
    </div>
  )
}

function BottomToolbar() {
  return (
    <div className="flex border-t border-[#f8f8f8] bg-[linear-gradient(#e0e0e0,#cfcfcf)]">
      <ToolGroup
        className="w-[944px] pr-1 pl-0.5"
        items={[
          'calM', 'v', 'calI', 'v', 'wrench', 'v', 'plane', 'v', 'moldblue', 'xdim', '|',
          'left', 'right', 'redcube', 'v', 'split', 'v', 'frame', 'funnel', 'textT', 'v', 'quad', 'v',
          'lipstick', 'v', 'sheet', 'v', 'pocket', 'v', '|', 'drill', '|',
          'wand', 'motor', 'pages', 'ui', 'circle', 'hatch', 'panda', 'screen', '|', 'logo', 'v', '>',
        ]}
      />
      <ToolGroup className="w-[247px] pl-1" items={['surface', 'mesh', 'curves', 'meshring', 'meshred', 'section', 'flag', 'roll', '>']} />
      <ToolGroup className="w-[132px] pl-1" items={['draft', 'slab', 'leg', 'blend', '>']} />
    </div>
  )
}

/* ---------- menu bar ---------- */

type Menu = { text?: string; key?: string; latin?: [string, string, string] }

const menus: Menu[] = [
  { text: '文件', key: 'F' },
  { text: '编辑', key: 'E' },
  { text: '视图', key: 'V' },
  { text: '插入', key: 'S' },
  { text: '格式', key: 'R' },
  { text: '信息', key: 'I' },
  { text: '分析', key: 'L' },
  { text: '装配', key: 'A' },
  { text: '首选项', key: 'P' },
  { text: '窗口', key: 'O' },
  { text: '工具箱', latin: ['GC', '', ''] },
  { text: '电极', key: 'D' },
  { text: '帮助', key: 'H' },
  { latin: ['HB_MOULD ', 'M', '6.6'] },
  { latin: ['', 'Y', 'SUG'] },
  { latin: ['TF_MOLD 2.10', '', ''] },
]

function Mnemonic({ letter, plain }: { letter: string; plain?: boolean }) {
  return (
    <span className="font-['Liberation_Mono',monospace] text-[9px]">
      (<span className={plain ? '' : 'underline'}>{letter}</span>)
    </span>
  )
}

function MenuBar() {
  return (
    <div className="flex h-6 items-center border-b border-[#b9b9b9] bg-[#e3e3e3] pr-1 pl-1">
      <Grip />
      <svg viewBox="0 0 16 16" className="mr-0.5 h-4 w-4" aria-hidden="true">
        <path d="M2 4 9 1 15 7 11 14 3 12Z" fill="#3c7edb" stroke="#173f8c" />
        <path d="M4 5 9 3 10 9 5 10Z" fill="#a9d2ff" />
        <path d="M10 9 15 7 11 14Z" fill="#122f74" />
      </svg>
      <nav className="flex flex-1 gap-3">
        {menus.map((m, i) => (
          <button key={i} className="whitespace-pre">
            {m.latin && (
              <span className="font-['Liberation_Mono',monospace] text-[9px]">
                {m.latin[0]}
                <span className="underline">{m.latin[1]}</span>
                {m.latin[2]}
              </span>
            )}
            {m.text}
            {m.key && <Mnemonic letter={m.key} />}
          </button>
        ))}
      </nav>
      <div className="flex gap-0.5">
        {['M4 11H10', 'M4 7H9V11H4ZM6 6V4H12V9H10', 'M4 4 11 11M11 4 4 11'].map((d, i) => (
          <button
            key={d}
            aria-label={['最小化', '还原', '关闭'][i]}
            className="h-[17px] w-4 rounded-[3px] border border-[#8a8a8a] bg-[#f1f1f1]"
          >
            <svg viewBox="0 0 15 15" className="h-[15px] w-3.5" fill="none" stroke="#555" strokeWidth="1.8">
              <path d={d} />
            </svg>
          </button>
        ))}
      </div>
    </div>
  )
}

function TitleBar() {
  return (
    <header className="flex h-[22px] items-center bg-[linear-gradient(#707070,#505050_8px,#1c1c1c_8px,#1a1a1a)] pl-0.5 text-white">
      <svg viewBox="0 0 16 16" className="h-4 w-4" aria-hidden="true">
        <path d="M1 1 8 4 12 2 15 5C15 11 10 14 4 15L6 11Z" fill="#4bb4e4" />
        <path d="M1 1 8 4 7 9Z" fill="#e8f3fb" />
        <path d="M6 4 10 4 8 10Z" fill="#cf1d2b" />
        <path d="M4 15 8 11 15 6C14 12 9 14 4 15Z" fill="#e5a13a" />
      </svg>
      <h1 className="flex-1 pt-px pl-0.5 text-[12px]">敬不甘平凡的我们！- 建模 - [_model5.prt（修改的）]</h1>
      <span className="mr-8 font-[Lato,sans-serif] text-[12px] font-black">SIEMENS</span>
      <div className="flex gap-1 self-start">
        <button aria-label="最小化" className="h-5 w-4 rounded-b-[3px] border-x border-b border-[#777] bg-[#444]">
          <svg viewBox="0 0 14 18" className="h-[18px] w-3.5">
            <path d="M2 12H9V15H2Z" fill="#fff" />
          </svg>
        </button>
        <button aria-label="还原" className="h-5 w-4 rounded-b-[3px] border-x border-b border-[#777] bg-[#444]">
          <svg viewBox="0 0 14 18" className="h-[18px] w-3.5" fill="none" stroke="#fff" strokeWidth="1.4">
            <path d="M2 8H8V14H2ZM5 8V5H11V11H8" />
          </svg>
        </button>
        <button
          aria-label="关闭"
          className="mr-px h-5 w-4 rounded-b-[3px] border-x border-b border-[#d88] bg-[linear-gradient(#c9746a,#d2301e)]"
        >
          <svg viewBox="0 0 14 18" className="h-[18px] w-3.5" stroke="#fff" strokeWidth="2.2">
            <path d="M2.5 5.5 11 14.5M11 5.5 2.5 14.5" />
          </svg>
        </button>
      </div>
    </header>
  )
}

/* ---------- resource bar ---------- */

const resourceTabs: { name: string; gap: string; art: ReactNode }[] = [
  {
    name: '信息',
    gap: 'mt-0',
    art: (
      <g>
        <circle cx="8" cy="13" r="7.5" fill="#2b78c8" stroke="#174f92" />
        <path d="M8 11V17M6 11.5H8M6 17H10" stroke="#fff" strokeWidth="2" />
        <circle cx="8" cy="8.5" r="1.3" fill="#fff" />
        <path d="M12 5C15 6 16 8 16.5 10M12 1C17 2 20 6 20.5 10" stroke="#3a66b0" strokeWidth="1.8" />
      </g>
    ),
  },
  {
    name: '浏览器',
    gap: 'mt-3.5',
    art: (
      <g>
        <path d="M3 0H14L19 5V22H3Z" fill="#fafcff" stroke="#4a78b8" />
        <path d="M14 0V5H19" fill="#cfe0f4" stroke="#4a78b8" />
        <circle cx="11" cy="14" r="5" fill="#3f9a4c" stroke="#2a63a0" />
        <path d="M8 12 11 10 13 15 10 18Z" fill="#8fd07c" />
      </g>
    ),
  },
  {
    name: '历史记录',
    gap: 'mt-3.5',
    art: (
      <g>
        <circle cx="11" cy="11" r="10" fill="#9ba6b4" stroke="#66707c" />
        <circle cx="11" cy="11" r="8" fill="#eaf1f8" />
        <path d="M11 4V11H16" stroke="#111" strokeWidth="1.6" />
        <path d="M11 17V18.5M3.5 11H5M17 11H18.5M5.5 5.5 6.5 6.5M15.5 15.5 16.5 16.5M5.5 16.5 6.5 15.5M15.5 6.5 16.5 5.5" stroke="#444" />
      </g>
    ),
  },
  {
    name: '角色',
    gap: 'mt-0.5',
    art: (
      <g>
        <path d="M2 2 6 0V19L2 21Z" fill="#eee" stroke="#888" />
        <rect x="7" y="1" width="14" height="17" fill="#fff" stroke="#777" />
        <circle cx="11" cy="5" r="2" fill="#3a7cd0" />
        <circle cx="11" cy="9.5" r="2" fill="#36b24a" />
        <circle cx="11" cy="14" r="2" fill="#d0342c" />
        <path d="M14 5H19M14 9.5H19M14 14H19" stroke="#333" />
      </g>
    ),
  },
  {
    name: '系统材料',
    gap: 'mt-0.5',
    art: (
      <g>
        <path d="M2 0H9V4H2Z" fill="#e03022" />
        <path d="M2 4H9V9H2Z" fill="#f6ea22" />
        <path d="M2 9H9V13H2Z" fill="#3fe04a" />
        <path d="M2 13H9V17H2Z" fill="#22c8e8" />
        <path d="M2 17H9V22H2Z" fill="#1c3fe0" />
        <path d="M11 9 18 21" stroke="#111" strokeWidth="3" />
        <path d="M9 7 11 10M12 4 11 8" stroke="#fff" strokeWidth="2" />
      </g>
    ),
  },
  {
    name: '向导',
    gap: 'mt-0.5',
    art: (
      <g>
        <path d="M2 2 7 0 6 16 2 15Z" fill="#4f9ad4" stroke="#2a5f96" />
        <path d="M8 4H21L17 8H9ZM9 10H17" fill="#b8d4f0" stroke="#2c4fa0" />
        <path d="M11 7 18 19" stroke="#111" strokeWidth="3" />
        <path d="M1 19 9 17" stroke="#5a9a7a" strokeWidth="2" />
      </g>
    ),
  },
  {
    name: '用户',
    gap: 'mt-0.5',
    art: (
      <g>
        <circle cx="15" cy="4.5" r="4.5" fill="#e7ae52" stroke="#a06b1c" strokeWidth=".7" />
        <path d="M9 17C9 11 12 9.5 15 9.5S22 11 22 17Z" fill="#3f9a3f" stroke="#276627" strokeWidth=".7" />
        <path d="M14 10H17L15.5 14Z" fill="#fff" />
        <circle cx="6" cy="11" r="4.5" fill="#a05a3a" />
        <circle cx="6.5" cy="12" r="3" fill="#f0c49a" />
        <path d="M0 23C0 18 3 16.5 6 16.5S12 18 12 23Z" fill="#8a49c4" stroke="#5d2c8c" strokeWidth=".7" />
      </g>
    ),
  },
  {
    name: '系统场景',
    gap: 'mt-0.5',
    art: (
      <g>
        <rect x="1" y="2" width="20" height="18" fill="#4d7fcc" stroke="#223a66" />
        <path d="M1 12H21V20H1Z" fill="#a9c4e8" />
        <path d="M1 18 7 11 11 15 15 11 21 18V20H1Z" fill="#f2f4fa" stroke="#8a93b8" strokeWidth=".8" />
        <circle cx="16" cy="6.5" r="3" fill="#f8ec4a" />
      </g>
    ),
  },
]

function ResourceBar() {
  return (
    <aside className="flex shrink-0">
      <div className="w-[30px] bg-[linear-gradient(90deg,#aaa,#b0b0b0_20px,#8e8e8e)] pt-[154px] pl-[5px]">
        {resourceTabs.map((tab) => (
          <button
            key={tab.name}
            aria-label={tab.name}
            className={clsx(
              'flex h-10 w-full items-center justify-center rounded-l-[3px] border-y border-l border-[#6e6e6e] bg-[#dcdcdc] shadow-[inset_1px_1px_0_#f6f6f6]',
              tab.gap,
            )}
          >
            <svg viewBox="0 0 22 23" className="h-[22px] w-[21px]" fill="none" aria-hidden="true">
              {tab.art}
            </svg>
          </button>
        ))}
      </div>
      <div className="w-[10px] border-r-2 border-l border-r-[#8d8d8d] border-l-[#fafafa] bg-[#ececec]" />
    </aside>
  )
}

/* ---------- pen palette ---------- */

const penTools: { name: string; art: ReactNode }[] = [
  { name: '橡皮', art: <path d="M3 14 9 5H15L10 14ZM3 14V17H9L15 8V5M10 14V17" fill="#fff" stroke="#222" /> },
  {
    name: '画笔',
    art: (
      <g>
        <path d="M7 12 13 5 15 7 9 14Z" fill="#fff" stroke="#222" />
        <path d="M12 4 15 2 18 4 15 8Z" fill="#111" />
        <path d="M2 17C3 13 6 12 8 14 8 17 12 16 11 18Z" fill="#c01820" />
      </g>
    ),
  },
  {
    name: '填充',
    art: (
      <g>
        <path d="M8 8 12 4 17 9 12 15Z" fill="#fff" stroke="#a0101c" strokeWidth="1.8" />
        <path d="M3 16C1 8 4 4 9 5 6 7 7 12 6 16Z" fill="#c01820" />
        <path d="M10 2V9M14 5 17 9 14 13" stroke="#111" strokeWidth="1.4" />
      </g>
    ),
  },
  {
    name: '铅笔',
    art: (
      <g>
        <path d="M6 5 9 4.5 18 14 15 17 6 8Z" fill="#fff" stroke="#222" />
        <path d="M14 15 17 13" stroke="#222" strokeWidth=".8" />
        <path d="M5 4H8V7H5Z" fill="#222" />
        <path d="M0 4H7" stroke="#c01820" />
      </g>
    ),
  },
  { name: '直线', art: <path d="M4 4 15 16" stroke="#c01820" /> },
  { name: '箭头', art: <path d="M15 16 4 5M4 10V5H9" stroke="#c01820" /> },
  { name: '矩形', art: <path d="M2.5 4.5H17.5V15.5H2.5Z" stroke="#c01820" /> },
  { name: '椭圆', art: <ellipse cx="10" cy="10" rx="7.5" ry="5.5" stroke="#c01820" /> },
  { name: '实心矩形', art: <path d="M2 4H18V16H2Z" fill="#e60000" /> },
  { name: '实心椭圆', art: <ellipse cx="10" cy="10" rx="8" ry="6" fill="#e60000" stroke="#8a0000" strokeWidth=".6" /> },
  { name: '文字', art: <path d="M6 16V8L8 5H12L14 8V16M6 11.5H14" stroke="#c01820" strokeWidth="2.8" /> },
  { name: '文字效果', art: <path d="M3 15V8L5 6 7 8V15M3 11H7M10 15V7L12 5H15L17 7V15M10 11H17" stroke="#a5a5a5" strokeWidth="1.6" /> },
  {
    name: '黑板',
    art: (
      <g>
        <path d="M2 3H18V11H2Z" fill="#000" />
        <path d="M2 11H18V18H2Z" fill="#fff" />
      </g>
    ),
  },
  {
    name: '清屏',
    art: (
      <g>
        <path d="M2.5 3.5H17.5V15.5H2.5Z" fill="#3fd9df" stroke="#111" />
        <path d="M5 18H15" stroke="#111" strokeWidth="1.6" />
        <path d="M6 6 13 13M14 6 6 13" stroke="#5a3a2a" strokeWidth="1.6" />
      </g>
    ),
  },
  {
    name: '放大镜',
    art: (
      <g>
        <circle cx="8.5" cy="8" r="5" fill="#3fe5e5" stroke="#155" />
        <path d="M12 12 17 17" stroke="#14705a" strokeWidth="2.2" />
      </g>
    ),
  },
  {
    name: '保存',
    art: (
      <g>
        <path d="M3 4H17V17H3Z" fill="#6d6d28" stroke="#111" />
        <path d="M6 4H14V10H6Z" fill="#fff" />
        <path d="M6 12H14V17H6Z" fill="#111" />
        <path d="M11 13H13V16H11Z" fill="#fff" />
      </g>
    ),
  },
  {
    name: '打开',
    art: (
      <g>
        <path d="M3 16V8H7L8 9H13V11" fill="#f7f1a2" stroke="#222" />
        <path d="M3 16 7 11H18L13 16Z" fill="#8c8a2c" stroke="#222" />
        <path d="M10 6C12 3 15 4 16 6M14 6H16.5V4" stroke="#222" strokeWidth=".8" />
      </g>
    ),
  },
  { name: '菱形', art: <path d="M10 4 15 10 10 16 5 10Z" stroke="#c01820" strokeDasharray="4 1" strokeWidth=".9" /> },
]

function PenPalette() {
  return (
    <section
      aria-label="电子教鞭"
      className="absolute top-[55px] left-0 z-10 w-[88px] border-t border-r border-b border-[#6b5d52] bg-[#d9cfc9] pr-1 pb-1 shadow-[inset_0_1px_0_#f5efea,inset_-1px_-1px_0_#f5efea]"
    >
      <div className="flex h-[25px] items-center justify-between bg-[linear-gradient(90deg,#e9e4df,#b3a79c_60%,#d8ccc4)] px-0.5">
        <h2>电子教鞭</h2>
        <button aria-label="关闭" className="flex h-[18px] w-4 items-center justify-center rounded-sm border border-[#85776d] bg-[#ddd3cd]">
          <svg viewBox="0 0 8 8" className="h-2 w-2" fill="#fff" stroke="#555">
            <path d="M1 .5H7V7.5H1ZM2.5 2.5 5.5 5.5M5.5 2.5 2.5 5.5" />
          </svg>
        </button>
      </div>
      <div className="border-y border-r border-[#555] bg-[#f1f0ef] pb-2">
        <div className="grid grid-cols-3 pt-[3px] pr-1 pl-px">
          {penTools.map((tool, i) => (
            <button
              key={tool.name}
              aria-label={tool.name}
              className={clsx('flex h-[26px] items-center justify-center', i === 3 && 'border-t border-l border-[#aaa] bg-[#e9e9e9]')}
            >
              <svg viewBox="0 0 20 20" className="h-5 w-5" fill="none" aria-hidden="true">
                {tool.art}
              </svg>
            </button>
          ))}
        </div>
        <div className="flex gap-1 px-1 pt-2">
          <label className="flex h-[21px] w-[34px] border-t border-l border-[#666] bg-white">
            <select aria-label="线宽" className="w-[18px] appearance-none pl-1 outline-none">
              <option>4</option>
            </select>
            <span className="flex flex-1 items-center justify-center border-r border-b border-[#555] bg-[#efefef]">
              <Arrow d={DOWN} />
            </span>
          </label>
          <button aria-label="颜色" className="flex h-[21px] w-[35px] border-t border-l border-[#666] bg-white p-px">
            <span className="h-[18px] w-4 border-2 border-[#7a1414] bg-[#e60000]" />
            <span className="ml-0.5 flex h-full flex-1 items-center justify-center border-r border-b border-[#555] bg-[#efefef]">
              <Arrow d={DOWN} />
            </span>
          </button>
        </div>
        <p className="pt-2 text-center leading-4 text-[#b5172a]">红烛软件</p>
      </div>
    </section>
  )
}

/* ---------- customize dialog ---------- */

const commands = [
  ['文件', 'F'],
  ['编辑', 'E'],
  ['视图', 'V'],
  ['插入', 'S'],
  ['格式', 'R'],
  ['产品制造信息', 'M'],
  ['信息', 'I'],
  ['分析', 'L'],
  ['工具', 'T'],
  ['装配', 'A'],
  ['首选项', 'P'],
]

const tabs = [
  { text: '工具条', className: 'w-[43px]' },
  { text: '命令', className: 'w-[46px]' },
  { text: '选项', className: 'w-[41px]' },
  { text: '布局', className: 'ml-0.5 w-[42px]' },
  { text: '角色', className: 'ml-0.5 w-[42px]' },
]

function CategoryList() {
  return (
    <div className="h-[279px] w-[183px] border border-[#777] bg-[#f3f3f3] p-px">
      <div className="flex">
        <ul className="w-[164px] bg-white">
          <li className="h-5 pl-0.5 leading-5">选择条</li>
          <li className="h-5 bg-[#3c9bf5] pl-0.5 leading-5 text-white outline-1 -outline-offset-1 outline-[#1f6bc0] outline-dotted">
            菜单条
          </li>
          {commands.map(([text, key], i) => (
            <li key={key} className={clsx('flex h-5 items-center border-b border-[#e6e6e6] pl-1', i % 2 ? 'bg-[#f7f7f7]' : 'bg-white')}>
              <span className="flex h-5 w-2 flex-col items-center">
                <span className="flex-1 border-l border-dotted border-[#999]" />
                <button aria-label="展开" className="flex h-2 w-2 items-center justify-center rounded-[2px] border border-[#888] bg-white">
                  <svg viewBox="0 0 5 5" className="h-[5px] w-[5px]" stroke="#222">
                    <path d="M0 2.5H5M2.5 0V5" />
                  </svg>
                </button>
                <span className="flex-1 border-l border-dotted border-[#999]" />
              </span>
              <span className="mr-[3px] ml-0.5 w-[3px] border-t border-dotted border-[#999]" />
              <span>
                {text}
                <Mnemonic letter={key} plain />
              </span>
            </li>
          ))}
        </ul>
        <div className="flex flex-1 flex-col items-center py-2">
          <Arrow d={UP} />
          <span className="mt-2 flex h-[22px] w-3 flex-col items-center justify-center gap-0.5 border border-[#8d8d8d] bg-[linear-gradient(90deg,#f4f4f4,#cfcfcf)]">
            <span className="h-px w-1.5 bg-[#555]" />
            <span className="h-px w-1.5 bg-[#555]" />
            <span className="h-px w-1.5 bg-[#555]" />
          </span>
          <span className="flex-1" />
          <Arrow d={DOWN} />
        </div>
      </div>
      <div className="flex h-4 items-center pr-5 pl-[5px]">
        <Arrow tall d="M4 0V6L0 3Z" />
        <span className="mr-auto ml-2 flex h-3.5 w-[98px] items-center justify-center gap-0.5 border border-[#8d8d8d] bg-[linear-gradient(#f4f4f4,#c9c9c9)]">
          <span className="h-1.5 w-px bg-[#555]" />
          <span className="h-1.5 w-px bg-[#555]" />
          <span className="h-1.5 w-px bg-[#555]" />
        </span>
        <Arrow tall d="M0 0V6L4 3Z" />
      </div>
    </div>
  )
}

function CommandList() {
  const bevel = 'border border-[#fff] border-r-[#666] border-b-[#666] bg-[#ececec] shadow-[1px_1px_0_#999]'
  return (
    <div className="flex h-[279px] w-[183px] overflow-hidden border border-[#777] pt-px">
      <ul className="flex-1">
        {commands.map(([text, key]) => (
          <li key={key} className="flex h-[26px] items-center justify-between pr-1 pl-[29px]">
            <span>
              {text}
              <Mnemonic letter={key} />
            </span>
            <svg viewBox="0 0 5 8" className="h-2 w-[5px]">
              <path d="M0 0V8L5 4Z" />
            </svg>
          </li>
        ))}
      </ul>
      <div className="flex w-[17px] flex-col bg-[#f6f6f6]">
        <span className={clsx('flex h-4 w-4 items-center justify-center', bevel)}>
          <Arrow d={UP} />
        </span>
        <span className={clsx('h-[22px] w-4', bevel)} />
        <span className={clsx('mt-auto mb-px flex h-4 w-4 items-center justify-center', bevel)}>
          <Arrow d={DOWN} />
        </span>
      </div>
    </div>
  )
}

// yellow spot under the pointer, text stays readable through it
function PointerSpot() {
  return (
    <svg viewBox="0 0 400 452" className="pointer-events-none absolute top-0 left-0 h-[452px] w-[400px] mix-blend-darken" aria-hidden="true">
      <circle cx="216" cy="166" r="26" fill="#e6f500" />
    </svg>
  )
}

function PenMarks() {
  return (
    <svg viewBox="0 0 400 452" className="pointer-events-none absolute top-0 left-0 h-[452px] w-[400px]" fill="none" aria-hidden="true">
      <path d="M217 167 220 176 236 191 241 186 225 171Z" fill="#fff" stroke="#222" />
      <path d="M217 167 220 175 225 171Z" fill="#111" />
      <g stroke="#cf0612" strokeWidth="4" strokeLinecap="round" strokeLinejoin="round">
        <path d="M70 6C63 5 57 9 53 19 50 30 49 43 50 56 53 64 59 68 68 71L98 77C107 77 110 72 112 63L115 37C115 28 114 23 105 22L73 22" />
        <path d="M290 124C297 123 304 127 305 136 305 148 300 165 299 183 297 205 299 216 303 230 307 240 313 250 325 258L342 264 341 256C334 252 320 252 312 256 307 261 306 270 306 285 305 320 311 335 314 354V393C314 397 310 402 305 405" />
      </g>
    </svg>
  )
}

function CustomizeDialog() {
  return (
    <section role="dialog" aria-label="定制" className="absolute top-[65px] left-[820px] w-[400px]">
      <div className="flex h-6 items-center justify-between rounded-t-[4px] border-t border-black bg-[linear-gradient(#707070,#3a3a3a_7px,#1c1c1c_7px,#1a1a1a)] pr-[3px] pl-2 text-white">
        <h2>定制</h2>
        <button aria-label="关闭" className="h-[17px] w-[17px] rounded-[3px] border border-[#f0c4bc] bg-[#d84a3a]">
          <svg viewBox="0 0 15 15" className="h-[15px] w-[15px]" stroke="#fff" strokeWidth="2.2">
            <path d="M3 3 12 12M12 3 3 12" />
          </svg>
        </button>
      </div>
      <div className="border-x border-[#c9c9c9] bg-[#ececec] pt-2 pr-[11px] pb-[7px] pl-2">
        <div role="tablist" className="flex h-5 items-end pl-0.5">
          {tabs.map((tab, i) => (
            <button
              key={tab.text}
              role="tab"
              aria-selected={i === 1}
              className={clsx(
                'rounded-t-[3px] border-x border-t border-[#7d7d7d]',
                i === 1 ? '-mb-px h-[21px] bg-[#ececec]' : 'h-[18px] bg-[linear-gradient(#f2f2f2_50%,#d0d0d0_50%,#dedede)]',
                tab.className,
              )}
            >
              {tab.text}
            </button>
          ))}
        </div>
        <div className="border border-[#868686] px-1 pt-4 pb-[5px] shadow-[1px_1px_0_#bdbdbd]">
          <p className="leading-3">
            添加命令到工具条，选一类别并
            <br />
            将该命令从对话框拖到工具条中。
          </p>
          <div className="flex gap-0.5 pt-3.5">
            <div>
              <h3 className="pb-1 leading-3">类别:</h3>
              <CategoryList />
            </div>
            <div>
              <h3 className="pb-1 leading-3">命令:</h3>
              <CommandList />
            </div>
          </div>
        </div>
        <div className="flex justify-end gap-1 pt-[7px] pr-px">
          {['键盘...', '关闭'].map((text) => (
            <button
              key={text}
              className="h-[22px] w-[51px] rounded-[3px] border border-[#6f6f6f] bg-[linear-gradient(#f4f4f4_50%,#d2d2d2_50%,#e2e2e2)] shadow-[inset_0_0_0_1px_#fafafa]"
            >
              {text}
            </button>
          ))}
        </div>
      </div>
      <div className="h-2 rounded-b-[5px] bg-[#1e1e1e]" />
      <PointerSpot />
      <PenMarks />
    </section>
  )
}

function ViewTriad() {
  return (
    <svg viewBox="0 -2 44 66" className="h-[66px] w-11" fill="none" aria-hidden="true">
      <path d="M7 21 20 15 35 21V43L20 48 7 42Z" fill="#d7d9da" />
      <path d="M7 21 20 15 35 21 20 27ZM20 27V48L35 43V21M20 15V36L7 42M20 36 35 43" stroke="#a5a7a8" strokeWidth="1.5" />
      <path d="M4 42 30 34" stroke="#a9cbb2" strokeWidth="2" />
      <path d="M28 31 34 32 29 36Z" fill="#8fb99b" />
      <path d="M3 42V13" stroke="#0b33b8" strokeWidth="2.4" />
      <path d="M3 6 6 16H0Z" fill="#0b33b8" />
      <path d="M4 42 22 50" stroke="#a6141f" strokeWidth="2.4" />
      <path d="M25 53 16 51 19 46Z" fill="#a6141f" />
      <circle cx="3" cy="42" r="3" fill="#ccc" stroke="#888" />
      <text x="0" y="5" fontSize="9" fontWeight="700" fill="#0b4be0" fontFamily="Liberation Sans">Z</text>
      <text x="24" y="59" fontSize="9" fontWeight="700" fill="#c0101c" fontFamily="Liberation Sans">X</text>
      <text x="33" y="33" fontSize="6" fill="#555" fontFamily="Liberation Sans">Y</text>
    </svg>
  )
}

function StatusBar() {
  const pane = 'h-full border-l border-[#f8f8f8] shadow-[-1px_0_0_#bbb]'
  return (
    <footer className="flex h-[22px] items-center border-t border-[#f8f8f8] bg-[#dadada] pl-0.5 text-[12px] font-medium text-black">
      <span className="w-[823px]">拖放按钮以定制</span>
      <span className={clsx('flex-1', pane)} />
      <span className={clsx('w-[19px]', pane)} />
      <span className={clsx('w-[31px]', pane)} />
      <span className={clsx('flex w-[54px] items-center gap-1 pl-[3px]', pane)}>
        <svg viewBox="0 0 15 15" className="h-[15px] w-[15px]">
          <path d="M0 0H15V15H0Z" fill="#849291" />
          <path d="M3 5 8 3 12 5 9 10 4 9Z" fill="#74807f" stroke="#98807f" strokeWidth=".6" />
        </svg>
        <svg viewBox="0 0 14 14" className="h-3.5 w-3.5" fill="none">
          <path d="M3.5 3H10.5V11H3.5Z" fill="#dff" stroke="#445" />
          <path d="M5 5H9V9H5Z" fill="#3a7cd8" />
          <path d="M1 3V1H3M11 1H13V3M1 11V13H3M11 13H13V11" stroke="#222" strokeWidth="1.3" />
        </svg>
      </span>
    </footer>
  )
}

export default function App() {
  return (
    <div className="flex min-h-screen flex-col bg-black px-[83px] py-5 font-['Noto_Sans','Noto_Sans_CJK_SC',sans-serif] text-[11px] text-[#1a1a1a]">
      <div className="relative flex flex-1 flex-col overflow-hidden bg-[#d6d6d6]">
        <TitleBar />
        <MenuBar />
        <TopToolbars />
        <SelectionBar />
        <div className="flex flex-1">
          <ResourceBar />
          <main className="relative flex flex-1 items-end bg-[linear-gradient(#b6b7b9,#c3c4c6_20%,#d9dadc_58%,#e6e8e9_85%)] pb-[38px] pl-12">
            <ViewTriad />
            <CustomizeDialog />
          </main>
        </div>
        <BottomToolbar />
        <StatusBar />
        <PenPalette />
      </div>
    </div>
  )
}
